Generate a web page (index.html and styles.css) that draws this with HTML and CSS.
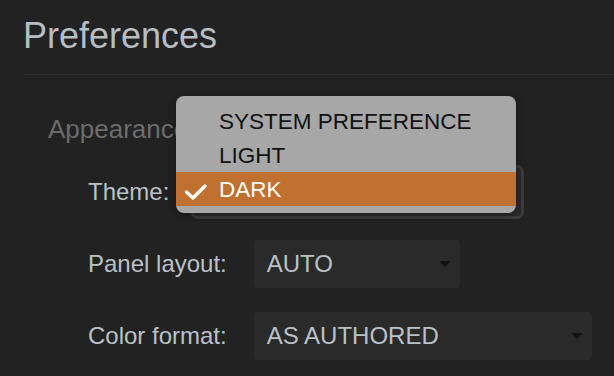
FILE: index.html
```html
<!DOCTYPE html>
<html lang="en">
<head>
    <meta charset="UTF-8">
    <meta name="viewport" content="width=device-width, initial-scale=1.0">
    <title>Preferences</title>
    <link rel="stylesheet" href="styles.css">
</head>
<body>

    <div class="page">
        <h1 class="title">Preferences</h1>

        <div class="group">
            <h2 class="group-title">Appearance</h2>

            <div class="rows">
                <div class="row">
                    <span class="label">Theme:</span>
                    <!-- covered by the open menu -->
                    <div class="select select-theme focused">
                        <span class="arrow"></span>
                    </div>

                    <ul class="menu">
                        <li class="menu-item">SYSTEM PREFERENCE</li>
                        <li class="menu-item">LIGHT</li>
                        <li class="menu-item checked">
                            <svg class="check" width="36" height="34" viewBox="0 0 36 34">
                                <polyline points="10.5,20 17,26 29,14" fill="none" stroke="#fff" stroke-width="3.4" stroke-linecap="round" stroke-linejoin="round"/>
                            </svg>
                            DARK
                        </li>
                    </ul>
                </div>

                <div class="row">
                    <span class="label">Panel layout:</span>
                    <div class="select select-panel">
                        <span class="value">AUTO</span>
                        <span class="arrow"></span>
                    </div>
                </div>

                <div class="row">
                    <span class="label">Color format:</span>
                    <div class="select select-color">
                        <span class="value">AS AUTHORED</span>
                        <span class="arrow"></span>
                    </div>
                </div>
            </div>
        </div>
    </div>

</body>
</html>
```

FILE: styles.css
```css
body {
    margin: 0;
    background-color: #222222;
    font-family: "Liberation Sans", Arial, sans-serif;
    overflow: hidden;
}
.page {
    padding: 16px 0 0 23px;
}
.title {
    margin: 0;
    padding-bottom: 18px;
    border-bottom: 1px solid #2d2d2d;
    font-size: 36px;
    line-height: 40px;
    font-weight: normal;
    color: #b5bdc5;
}
.group {
    padding-left: 25px;
}
.group-title {
    margin: 39px 0 0 0;
    font-size: 26px;
    line-height: 30px;
    font-weight: normal;
    color: #6c6c6c;
}
.rows {
    display: flex;
    flex-direction: column;
    gap: 24px;
    margin: 24px 0 0 40px;
}
.row {
    position: relative;
    display: flex;
    align-items: center;
    height: 48px;
}
.label {
    font-size: 24px;
    color: #b9c1c9;
    margin-right: 27px;
}
.select {
    display: flex;
    align-items: center;
    justify-content: space-between;
    box-sizing: border-box;
    height: 48px;
    padding: 0 9px 0 13px;
    background-color: #2a2a2a;
    border-radius: 4px;
    font-size: 24px;
    color: #b9c1c9;
}
.select-theme {
    width: 327px;
    margin-left: -2px;
    justify-content: flex-end;
}
.select-panel {
    width: 206px;
}
.select-color {
    width: 338px;
}
.focused {
    outline: 3px solid #3c3c3c;
}
.arrow {
    width: 0;
    height: 0;
    border-left: 6px solid transparent;
    border-right: 6px solid transparent;
    border-top: 6px solid #111111;
}
.menu {
    position: absolute;
    left: 88px;
    top: -72px;
    width: 340px;
    margin: 0;
    padding: 8px 0 7px 0;
    list-style: none;
    background-color: #a7a7a7;
    border-radius: 8px;
    box-shadow: 0 2px 8px rgba(0, 0, 0, 0.35);
}
.menu-item {
    position: relative;
    height: 34px;
    line-height: 35px;
    padding-left: 43px;
    font-size: 22.5px;
    color: #111111;
}
.menu-item.checked {
    background-color: #c0702f;
    color: #ffffff;
}
.check {
    position: absolute;
    left: 0;
    top: 0;
}
```
